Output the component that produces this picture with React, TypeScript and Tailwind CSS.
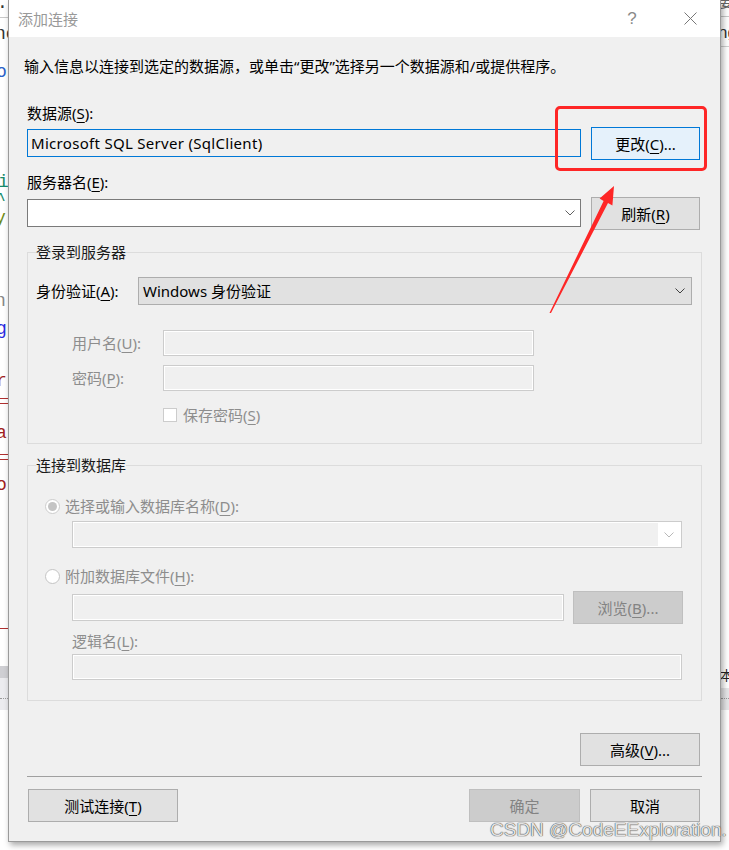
import React from 'react';

const U = ({ children }: { children: React.ReactNode }) => (
  <span className="underline underline-offset-[3px] decoration-1">{children}</span>
);

const Chevron = ({ color }: { color: string }) => (
  <svg width="10" height="6" viewBox="0 0 10 6">
    <path d="M0.5 0.5 L5 5 L9.5 0.5" fill="none" stroke={color} strokeWidth="1" />
  </svg>
);

const btn = 'h-[33px] shrink-0 border flex items-center justify-center leading-[20px]';
const btnNormal = `${btn} bg-[#e1e1e1] border-[#adadad] text-black`;
const btnDisabled = `${btn} bg-[#cccccc] border-[#bfbfbf] text-[#838383]`;
const disabledBox = 'shrink-0 border border-[#cccccc] bg-[#f0f0f0] shadow-[inset_0_0_0_1px_#ffffff]';

// code editor peeking out behind the dialog, left side
const LeftStrip = () => (
  <div className="w-[8px] h-full shrink-0 bg-white overflow-hidden flex flex-col text-[18px] font-['Liberation_Mono',monospace] leading-[18px]">
    <div className="h-[18px] -mt-[6px] text-[#333] -ml-[3px]">.C</div>
    <div className="h-px mt-[5px] bg-[#c8c8c8]" />
    <div className="h-[18px] mt-[7px] text-[#333] -ml-[5px]">ne</div>
    <div className="h-[18px] mt-[20px] text-[#2a62c9] -ml-[4px]">o</div>
    <div className="h-[18px] mt-[92px] text-[#188a6a] -ml-[2px]">i</div>
    <div className="h-[18px] text-[#188a6a] -ml-[5px]">^</div>
    <div className="h-[18px] text-[#6f8a16] -ml-[5px]">y</div>
    <div className="h-[18px] mt-[65px] text-[#888] -ml-[5px]">n</div>
    <div className="h-[18px] mt-[10px] text-[#2a2ae0] -ml-[4px]">g</div>
    <div className="h-[18px] mt-[34px] text-[#a02020] -ml-[4px]">r</div>
    <div className="h-px mt-[8px] bg-[#b03030]" />
    <div className="h-px mt-[4px] bg-[#b03030]" />
    <div className="h-[18px] mt-[20px] text-[#a02020] -ml-[4px]">a</div>
    <div className="h-px mt-[12px] bg-[#b03030]" />
    <div className="h-px mt-[4px] bg-[#b03030]" />
    <div className="h-[18px] mt-[16px] text-[#a02020] -ml-[4px]">o</div>
    <div className="h-px mt-[134px] bg-[#b03030]" />
    <div className="h-[12px] mt-[37px] bg-[#cfcfd3]" />
    <div className="h-[32px] bg-[#ececef] flex flex-col">
      <div className="h-px mt-[20px] border-t border-dotted border-[#9a9a9a]" />
    </div>
  </div>
);

// right side of the window behind the dialog
const RightStrip = () => (
  <div className="w-[8px] h-full shrink-0 bg-white overflow-hidden flex flex-col text-[15px] leading-[18px] font-['Noto_Sans_CJK_SC',sans-serif]">
    <div className="h-[18px] -mt-[8px] text-[#666] -ml-[2px]">要</div>
    <div className="h-px mt-[6px] bg-[#c8c8c8]" />
    <div className="h-[18px] mt-[7px] text-[#333] -ml-[3px] text-[17px] font-['Liberation_Sans',sans-serif]">ng</div>
    <div className="h-px mt-[4px] bg-[#d0d0d0]" />
    <div className="h-[18px] mt-[619px] text-[#222] text-[13px] -ml-[1px]">本</div>
    <div className="h-[22px] mt-[4px] bg-[#e6e6e8] flex flex-col">
      <div className="h-px mt-[10px] border-t border-dotted border-[#9a9a9a]" />
    </div>
  </div>
);

export default function App() {
  return (
    <div className="relative w-[729px] h-[850px] overflow-hidden bg-white flex font-['Noto_Sans','Noto_Sans_CJK_SC',sans-serif] text-[15px] text-black">
      <LeftStrip />

      <div className="relative z-10 w-[713px] h-[842px] shrink-0 flex flex-col bg-[#f0f0f0] border-x border-b border-[#9a9a9a] shadow-[2px_3px_6px_rgba(0,0,0,0.35)] overflow-hidden">
        {/* title bar */}
        <div className="h-[37px] shrink-0 bg-white flex items-center pl-[9px] pr-[18px]">
          <span className="text-[#999999] leading-[20px]">添加连接</span>
          <span className="ml-auto w-[24px] text-center text-[#8a8a8a] font-['Liberation_Sans',sans-serif] text-[17px] leading-[20px]">?</span>
          <span className="ml-[34px] w-[24px] flex items-center justify-center">
            <svg width="13" height="13" viewBox="0 0 13 13">
              <path d="M0.5 0.5 L12.5 12.5 M12.5 0.5 L0.5 12.5" stroke="#777777" strokeWidth="1" fill="none" />
            </svg>
          </span>
        </div>

        <div className="flex flex-col px-[18px]">
          <div className="mt-[19px] -ml-[3px] leading-[20px] whitespace-nowrap">
            输入信息以连接到选定的数据源，或单击“更改”选择另一个数据源和/或提供程序。
          </div>

          <div className="mt-[27px] leading-[20px]">数据源(<U>S</U>):</div>
          <div className="mt-[4px] h-[33px] flex items-start">
            <div className="mt-[2px] w-[554px] h-[28px] shrink-0 border border-[#0078d7] bg-[#f0f0f0] flex items-center pl-[3px] leading-[20px] tracking-[0.3px]">
              Microsoft SQL Server (SqlClient)
            </div>
            <div className={`${btn} ml-[10px] w-[109px] bg-[#e5f1fb] border-[#0078d7]`}>
              更改(<U>C</U>)...
            </div>
          </div>

          <div className="mt-[12px] leading-[20px]">服务器名(<U>E</U>):</div>
          <div className="mt-[5px] h-[33px] flex items-start">
            <div className="mt-[2px] w-[554px] h-[28px] shrink-0 border border-[#7a7a7a] bg-white flex items-center justify-end pr-[5px]">
              <Chevron color="#606060" />
            </div>
            <div className={`${btnNormal} ml-[10px] w-[109px]`}>
              刷新(<U>R</U>)
            </div>
          </div>

          {/* login group */}
          <fieldset className="mt-[12px] border border-[#dcdcdc] px-[8px] pb-[18px]">
            <legend className="leading-[20px] text-[#1a1a1a]">登录到服务器</legend>
            <div className="mt-[15px] h-[28px] flex items-center">
              <div className="w-[102px] shrink-0 leading-[20px]">身份验证(<U>A</U>):</div>
              <div className="w-[554px] h-[28px] shrink-0 border border-[#adadad] bg-[#e1e1e1] flex items-center pl-[4px] pr-[6px] leading-[20px]">
                Windows 身份验证
                <span className="ml-auto flex"><Chevron color="#404040" /></span>
              </div>
            </div>
            <div className="mt-[25px] h-[26px] flex items-center pl-[36px] text-[#8d8d8d]">
              <div className="w-[91px] shrink-0 leading-[20px]">用户名(<U>U</U>):</div>
              <div className={`${disabledBox} w-[371px] h-[26px]`} />
            </div>
            <div className="mt-[9px] h-[26px] flex items-center pl-[36px] text-[#8d8d8d]">
              <div className="w-[91px] shrink-0 leading-[20px]">密码(<U>P</U>):</div>
              <div className={`${disabledBox} w-[371px] h-[26px]`} />
            </div>
            <div className="mt-[14px] h-[20px] flex items-center pl-[127px] text-[#8d8d8d]">
              <div className="w-[14px] h-[14px] shrink-0 border border-[#cccccc] bg-white" />
              <div className="ml-[6px] leading-[20px]">保存密码(<U>S</U>)</div>
            </div>
          </fieldset>

          {/* database group */}
          <fieldset className="mt-[11px] border border-[#dcdcdc] px-[8px] pb-[20px] text-[#8d8d8d]">
            <legend className="leading-[20px] text-[#1a1a1a]">连接到数据库</legend>
            <div className="mt-[21px] h-[20px] flex items-center pl-[9px]">
              <div className="w-[15px] h-[15px] shrink-0 rounded-full border border-[#cccccc] bg-white flex items-center justify-center">
                <div className="w-[9px] h-[9px] rounded-full bg-[#c4c4c4]" />
              </div>
              <div className="ml-[5px] leading-[20px]">选择或输入数据库名称(<U>D</U>):</div>
            </div>
            <div className="mt-[5px] ml-[36px] w-[610px] h-[27px] border border-[#cccccc] bg-white p-[1px] flex">
              <div className="w-[584px] h-full bg-[#f0f0f0]" />
              <div className="flex-1 flex items-center justify-center">
                <Chevron color="#b8b8b8" />
              </div>
            </div>
            <div className="mt-[18px] h-[20px] flex items-center pl-[9px]">
              <div className="w-[15px] h-[15px] shrink-0 rounded-full border border-[#c4c4c4] bg-white" />
              <div className="ml-[5px] leading-[20px]">附加数据库文件(<U>H</U>):</div>
            </div>
            <div className="mt-[5px] ml-[36px] h-[33px] flex items-center">
              <div className={`${disabledBox} w-[492px] h-[27px]`} />
              <div className={`${btnDisabled} ml-[9px] w-[110px]`}>
                浏览(<U>B</U>)...
              </div>
            </div>
            <div className="mt-[7px] ml-[36px] leading-[20px]">逻辑名(<U>L</U>):</div>
            <div className={`${disabledBox} mt-[3px] ml-[36px] w-[610px] h-[26px]`} />
          </fieldset>

          <div className={`${btnNormal} mt-[32px] self-end mr-[2px] w-[120px]`}>
            高级(<U>V</U>)...
          </div>

          <div className="mt-[10px] h-px bg-[#a0a0a0]" />

          <div className="mt-[12px] h-[33px] flex">
            <div className={`${btnNormal} ml-[1px] w-[150px]`}>
              测试连接(<U>T</U>)
            </div>
            <div className={`${btnDisabled} ml-auto w-[111px]`}>确定</div>
            <div className={`${btnNormal} ml-[10px] mr-[2px] w-[110px]`}>取消</div>
          </div>
        </div>
      </div>

      <RightStrip />

      {/* red annotation box */}
      <div className="absolute z-20 left-[555px] top-[106px] w-[152px] h-[65px] border-[3px] border-[#fe2626] rounded-[5px] pointer-events-none" />

      {/* red annotation arrow */}
      <svg className="absolute z-20 left-0 top-0 pointer-events-none" width="729" height="850" viewBox="0 0 729 850">
        <polygon
          points="549.5,313 603.6,200.9 599.6,198.4 614,186 612.4,205.4 608,203.1 551,313"
          fill="#fe2626"
        />
      </svg>

      {/* watermark */}
      <div className="absolute z-20 left-[490px] top-[818px] text-[19px] leading-[24px] font-['Liberation_Sans',sans-serif] text-[#e2e2e2] whitespace-nowrap [text-shadow:0_0_1px_#3a3a3a,0_0_1px_#3a3a3a]">
        CSDN @CodeEExploration.
      </div>
    </div>
  );
}
